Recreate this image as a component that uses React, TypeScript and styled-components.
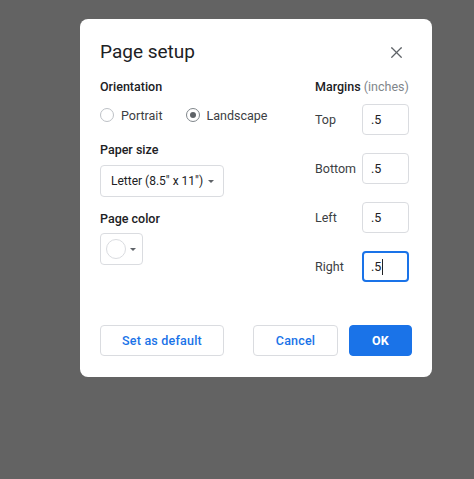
import React from "react";
import styled, { createGlobalStyle } from "styled-components";
import { X } from "lucide-react";

//#region Styled components

const GlobalStyle = createGlobalStyle`
  html, body {
    margin: 0;
    padding: 0;
    background: #636363;
    font-family: Roboto, "Liberation Sans", Arial, sans-serif;
  }
  * {
    box-sizing: border-box;
  }
`;

const Backdrop = styled("div")`
  min-height: 479px;
  padding: 19px 0 0 80px;
`;

const Dialog = styled("div")`
  width: 352px;
  height: 358px;
  background: #ffffff;
  border-radius: 8px;
  padding: 19px 20px 21px 20px;
  display: flex;
  flex-direction: column;
  color: #202124;
`;

const Header = styled("div")`
  display: flex;
  align-items: center;
  justify-content: space-between;
  height: 28px;
`;

const Title = styled("h1")`
  margin: 0;
  font-size: 19px;
  font-weight: 400;
  line-height: 28px;
  color: #202124;
`;

const CloseButton = styled("button")`
  border: none;
  background: transparent;
  padding: 0;
  margin-right: 6px;
  display: flex;
  color: #5f6368;
  cursor: pointer;
`;

const Body = styled("div")`
  display: flex;
  justify-content: space-between;
  margin-top: 11px;
`;

const Column = styled("div")<{ $width?: number }>`
  display: flex;
  flex-direction: column;
  width: ${(p) => (p.$width ? `${p.$width}px` : "auto")};
`;

const Label = styled("div")<{ $gap?: number }>`
  font-size: 12.5px;
  font-weight: 500;
  line-height: 20px;
  white-space: nowrap;
  color: #202124;
  margin-bottom: ${(p) => p.$gap ?? 4}px;
`;

const Hint = styled("span")`
  font-weight: 400;
  color: #80868b;
`;

const RadioRow = styled("div")`
  display: flex;
  align-items: center;
  gap: 23px;
  height: 20px;
  margin-bottom: 15px;
`;

const RadioOption = styled("label")`
  display: flex;
  align-items: center;
  gap: 7px;
  font-size: 12.5px;
  color: #3c4043;
`;

const RadioCircle = styled("span")<{ $checked?: boolean }>`
  width: 14px;
  height: 14px;
  border-radius: 50%;
  border: 1px solid ${(p) => (p.$checked ? "#80868b" : "#bdc1c6")};
  display: flex;
  align-items: center;
  justify-content: center;
  &::after {
    content: "";
    width: 6px;
    height: 6px;
    border-radius: 50%;
    background: ${(p) => (p.$checked ? "#5f6368" : "transparent")};
  }
`;

const Dropdown = styled("div")<{ $width: number; $pad: string }>`
  width: ${(p) => p.$width}px;
  height: 32px;
  border: 1px solid #dadce0;
  border-radius: 4px;
  display: flex;
  align-items: center;
  justify-content: space-between;
  padding: ${(p) => p.$pad};
  font-size: 12px;
  white-space: nowrap;
  color: #202124;
  margin-bottom: 12px;
`;

const Caret = styled("span")`
  width: 0;
  height: 0;
  border-left: 3.5px solid transparent;
  border-right: 3.5px solid transparent;
  border-top: 3.5px solid #5f6368;
`;

const Swatch = styled("span")`
  width: 20px;
  height: 20px;
  border-radius: 50%;
  border: 1px solid #dadce0;
  background: #ffffff;
`;

const MarginList = styled("div")`
  display: flex;
  flex-direction: column;
  gap: 18px;
  padding-top: 7px;
`;

const MarginRow = styled("div")`
  display: flex;
  align-items: center;
  justify-content: space-between;
  width: 94px;
`;

const MarginName = styled("span")`
  font-size: 12.5px;
  color: #3c4043;
`;

const MarginInput = styled("div")<{ $focused?: boolean }>`
  width: 47px;
  height: 31px;
  border-radius: 4px;
  border: ${(p) => (p.$focused ? "2px solid #1a73e8" : "1px solid #dadce0")};
  padding-left: ${(p) => (p.$focused ? 7 : 8)}px;
  display: flex;
  align-items: center;
  font-size: 12.5px;
  color: #202124;
`;

const TextCaret = styled("span")`
  display: inline-block;
  width: 1px;
  height: 16px;
  margin-left: 1px;
  background: #202124;
`;

const Footer = styled("div")`
  margin-top: auto;
  display: flex;
  justify-content: space-between;
  align-items: center;
`;

const ButtonGroup = styled("div")`
  display: flex;
  gap: 11px;
`;

const Button = styled("button")<{ $primary?: boolean; $width: number }>`
  width: ${(p) => p.$width}px;
  height: 31px;
  border-radius: 4px;
  font-family: Roboto, "Liberation Sans", Arial, sans-serif;
  font-size: 12.5px;
  font-weight: ${(p) => (p.$primary ? 700 : 500)};
  letter-spacing: 0.2px;
  cursor: pointer;
  border: 1px solid ${(p) => (p.$primary ? "#1a73e8" : "#dadce0")};
  background: ${(p) => (p.$primary ? "#1a73e8" : "#ffffff")};
  color: ${(p) => (p.$primary ? "#ffffff" : "#1a73e8")};
`;
//#endregion

const margins = [
  { name: "Top", value: ".5" },
  { name: "Bottom", value: ".5" },
  { name: "Left", value: ".5" },
  { name: "Right", value: ".5", focused: true },
];

const App: React.FC = () => {
  return (
    <>
      <GlobalStyle />
      <Backdrop>
        <Dialog>
          <Header>
            <Title>Page setup</Title>
            <CloseButton aria-label="Close">
              <X size={19} strokeWidth={1.6} />
            </CloseButton>
          </Header>
          <Body>
            <Column>
              <Label $gap={8}>Orientation</Label>
              <RadioRow>
                <RadioOption>
                  <RadioCircle />
                  Portrait
                </RadioOption>
                <RadioOption>
                  <RadioCircle $checked />
                  Landscape
                </RadioOption>
              </RadioRow>
              <Label $gap={5}>Paper size</Label>
              <Dropdown $width={124} $pad="0 9px 0 10px">
                Letter (8.5" x 11")
                <Caret />
              </Dropdown>
              <Label $gap={4}>Page color</Label>
              <Dropdown $width={43} $pad="0 6px 0 5px">
                <Swatch />
                <Caret />
              </Dropdown>
            </Column>
            <Column $width={97}>
              <Label $gap={0}>
                Margins <Hint>(inches)</Hint>
              </Label>
              <MarginList>
                {margins.map((m) => (
                  <MarginRow key={m.name}>
                    <MarginName>{m.name}</MarginName>
                    <MarginInput $focused={m.focused}>
                      {m.value}
                      {m.focused && <TextCaret />}
                    </MarginInput>
                  </MarginRow>
                ))}
              </MarginList>
            </Column>
          </Body>
          <Footer>
            <Button $width={124}>Set as default</Button>
            <ButtonGroup>
              <Button $width={85}>Cancel</Button>
              <Button $primary $width={63}>
                OK
              </Button>
            </ButtonGroup>
          </Footer>
        </Dialog>
      </Backdrop>
    </>
  );
};

export default App;
